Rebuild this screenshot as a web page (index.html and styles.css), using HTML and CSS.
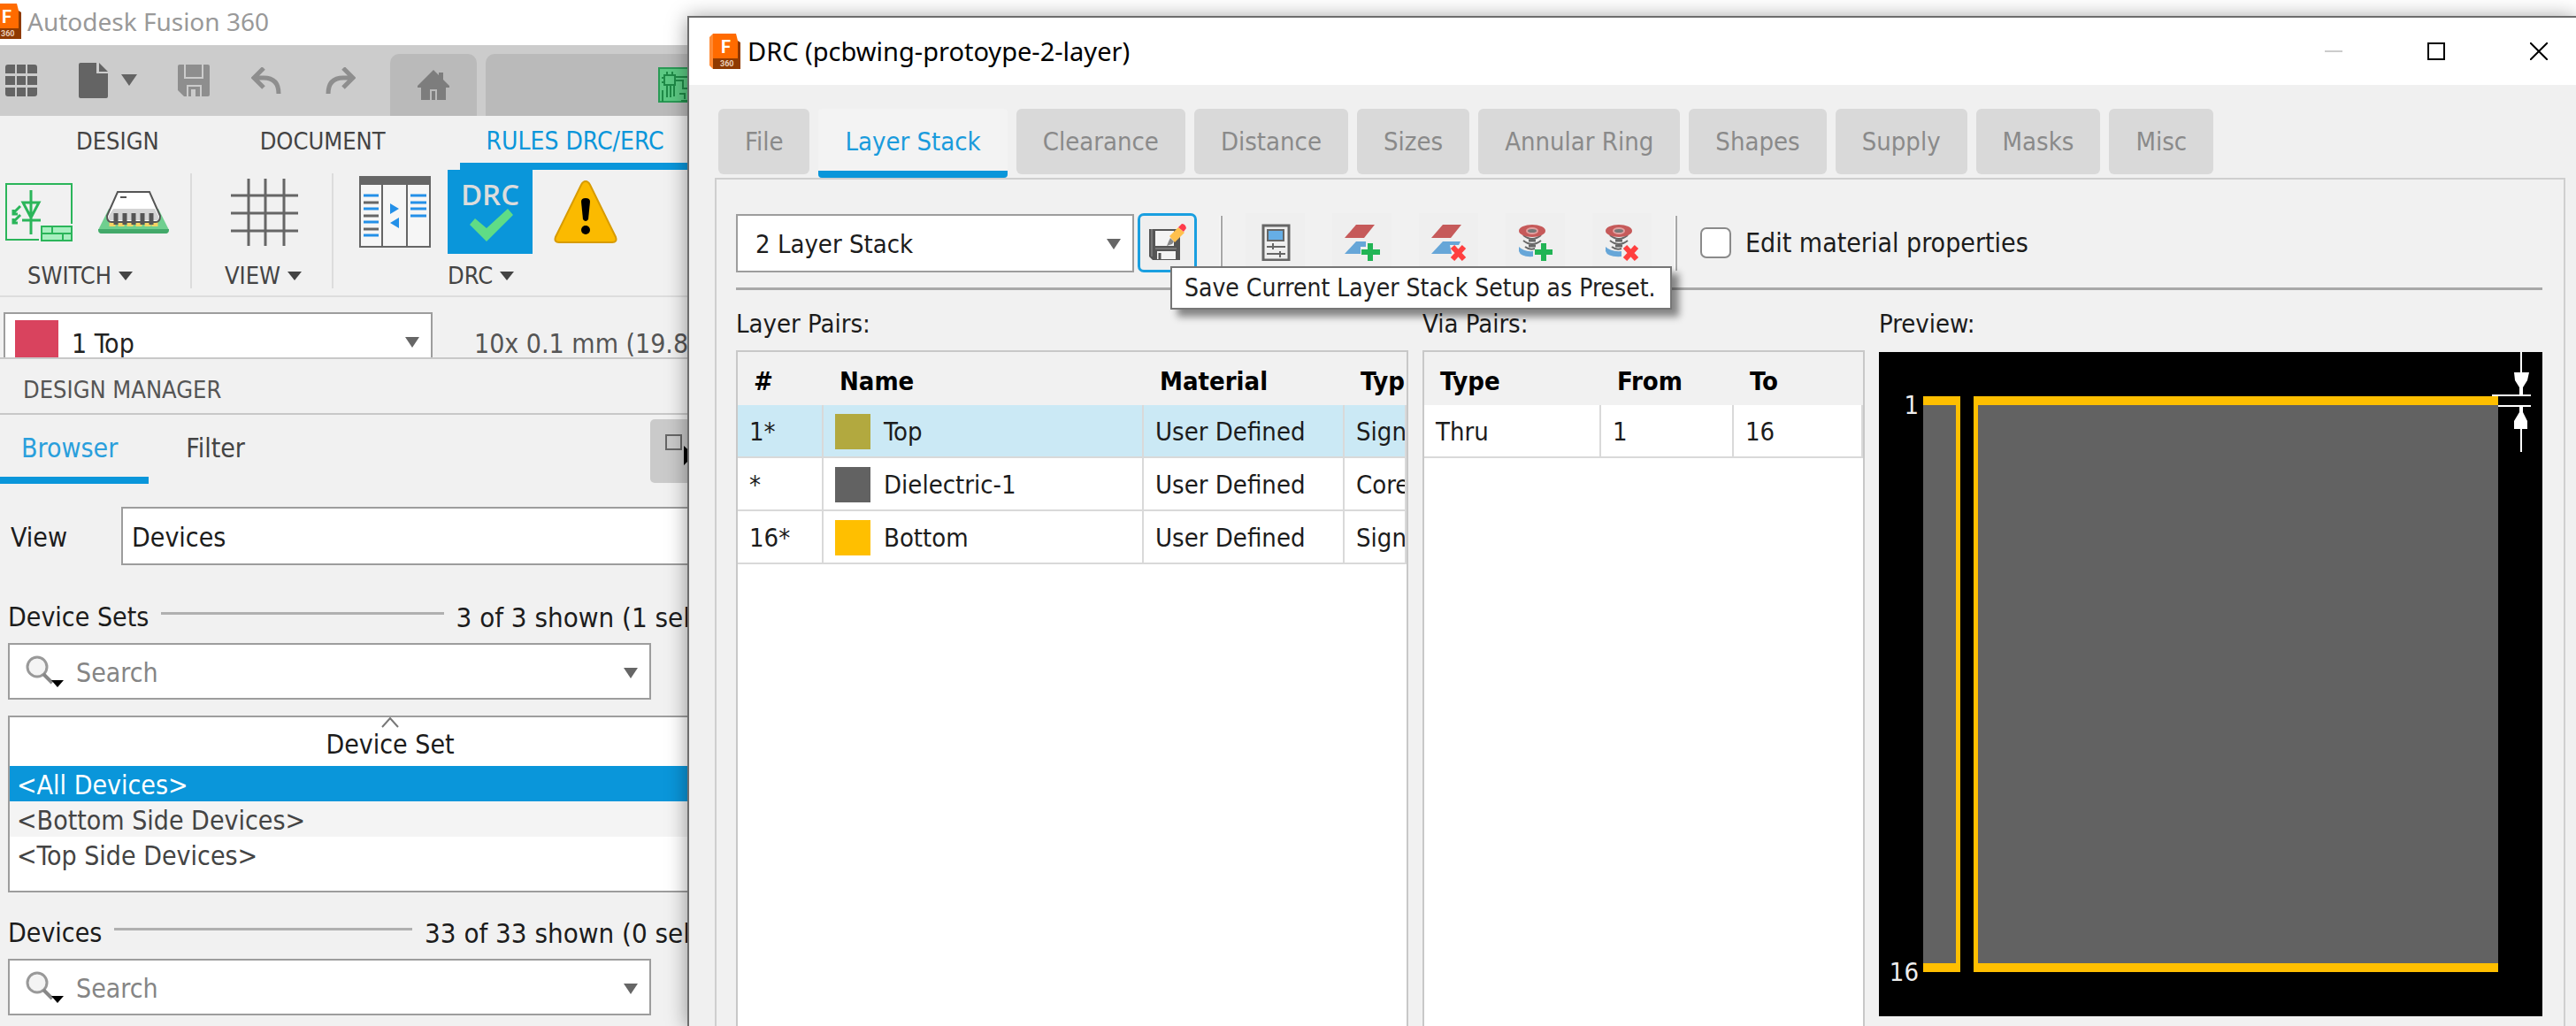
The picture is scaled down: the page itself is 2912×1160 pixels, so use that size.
FILE: index.html
```
<!DOCTYPE html>
<html lang="en">
<head>
  <meta charset="UTF-8">
  <meta name="viewport" content="width=device-width, initial-scale=1">
  <title>Autodesk Fusion 360</title>
  <link rel="stylesheet" href="styles.css">
</head>
<body>

<!-- Main window -->
<div class="app">
  <header class="app-title">
    <svg class="logo" width="35" height="40" viewBox="0 0 35 40">
      <path d="M0 4L4 0V40H4L0 36Z" fill="#ff8a33"/>
      <path d="M4 0H30L32 8V28H4Z" fill="#ff6b00"/>
      <path d="M4 28H32V8L35 10V40H4Z" fill="#8f3a00"/>
      <text x="13" y="22" class="logo-f">F</text>
      <text x="12" y="37" class="logo-n">360</text>
    </svg>
    <span>Autodesk Fusion 360</span>
  </header>

  <div class="quickbar">
    <button class="qa qa-grid" aria-label="Data panel">
      <svg width="36" height="36" viewBox="0 0 36 36" fill="#646464">
        <path d="M3 0H11V10H0V3Q0 0 3 0ZM13 0H23V10H13ZM25 0H33Q36 0 36 3V10H25ZM0 13H11V23H0ZM13 13H23V23H13ZM25 13H36V23H25ZM0 26H11V36H3Q0 36 0 33ZM13 26H23V36H13ZM25 26H36V33Q36 36 33 36H25Z"/>
      </svg>
    </button>
    <button class="qa qa-file" aria-label="File">
      <svg width="66" height="40" viewBox="0 0 66 40" fill="#646464">
        <path d="M2 0H20V12H33V38Q33 40 31 40H2Q0 40 0 38V2Q0 0 2 0ZM23 0L33 10H23ZM48 13H66L57 26Z"/>
      </svg>
    </button>
    <button class="qa qa-save" aria-label="Save">
      <svg width="36" height="36" viewBox="0 0 36 36">
        <path d="M2 0H34Q36 0 36 2V34Q36 36 34 36H7L0 29V2Q0 0 2 0Z" fill="#8e8e8e"/>
        <path d="M8 0V15H28V0M11 36V24H26V36" fill="none" stroke="#ccc" stroke-width="2"/>
        <path d="M15 28H20V36H15Z" fill="#ccc"/>
      </svg>
    </button>
    <button class="qa qa-undo" aria-label="Undo">
      <svg width="34" height="30" viewBox="0 0 34 30" fill="none" stroke="#8e8e8e" stroke-width="5">
        <path d="M14 1L3 12L14 23M4 12H14Q31 12 31 30"/>
      </svg>
    </button>
    <button class="qa qa-redo" aria-label="Redo">
      <svg width="34" height="30" viewBox="0 0 34 30" fill="none" stroke="#8e8e8e" stroke-width="5">
        <path d="M20 1L31 12L20 23M30 12H20Q3 12 3 30"/>
      </svg>
    </button>
    <div class="doc-tab doc-home">
      <svg width="36" height="34" viewBox="0 0 36 34" fill="#7d7d7d">
        <path d="M18 0L24 6V3H29V11L36 18V20H32V34H22V22H14V34H4V20H0V18Z"/>
        <path d="M16 24H20V34H16Z"/>
      </svg>
    </div>
    <div class="doc-tab doc-board">
      <svg width="40" height="40" viewBox="0 0 40 40">
        <path d="M1 1H39V39H1Z" fill="#5cc983" stroke="#2a9a55" stroke-width="2"/>
        <path d="M7 9H19V20H7ZM10 5V9M16 5V9M4 12H7M4 17H7M10 20V34M14 20V34M18 20V33M19 11H40M19 15H28V24H34M5 26V39M24 30H30V36M26 38H34" fill="none" stroke="#1f8a47" stroke-width="2"/>
      </svg>
    </div>
  </div>

  <nav class="ribbon-tabs">
    <a href="#">DESIGN</a>
    <a href="#">DOCUMENT</a>
    <a href="#" class="active">RULES DRC/ERC</a>
  </nav>

  <div class="ribbon">
    <div class="group group-switch">
      <div class="group-icons">
        <svg width="76" height="66" viewBox="0 0 76 66" fill="none" stroke="#2bb55a" stroke-width="3">
          <path d="M38 64H1V1H75V46" stroke-width="2"/>
          <path d="M29 8V58M19 42H40M20 22H38L29 39ZM17 26L9 34M17 36L9 44M9 30V35H14M9 40V45H14"/>
          <path d="M41 49H75V65H41ZM41 57H75M53 49V57M65 57V65" fill="#a8efc0" stroke-width="2"/>
        </svg>
        <svg width="80" height="48" viewBox="0 0 80 48">
          <path d="M12 20L68 20L80 44Q80 48 76 48H4Q0 48 0 44Z" fill="#6fcf8f"/>
          <path d="M0 43H80Q80 48 76 48H4Q0 48 0 43Z" fill="#43a96a"/>
          <path d="M16 34V40M26 34V40M36 34V40M46 34V40M56 34V40M64 34V40" stroke="#f6d464" stroke-width="7"/>
          <path d="M22 1H58L70 28Q70 35 65 35H15Q10 35 10 28Z" fill="#fff" stroke="#555" stroke-width="2"/>
          <path d="M17 20H64L68 28V33H12V28Z" fill="#d4d4d4"/>
          <path d="M20 25V38M30 25V38M40 25V38M50 25V38M60 25V38" stroke="#555" stroke-width="5"/>
          <path d="M25 7H32" stroke="#555" stroke-width="2"/>
        </svg>
      </div>
      <button class="group-label">SWITCH <i class="tri"></i></button>
    </div>
    <div class="group group-view">
      <div class="group-icons">
        <svg width="76" height="76" viewBox="0 0 76 76" fill="none" stroke="#666" stroke-width="3">
          <path d="M0 19H76M0 39H76M0 59H76M20 0V76M39 0V76M60 0V76"/>
        </svg>
      </div>
      <button class="group-label">VIEW <i class="tri"></i></button>
    </div>
    <div class="group group-drc">
      <div class="group-icons">
        <svg width="81" height="81" viewBox="0 0 81 81" fill="none">
          <path d="M1 1H80V80H1Z" fill="#f6f6f6" stroke="#666" stroke-width="2"/>
          <path d="M0 0H81V10H0Z" fill="#666"/>
          <path d="M26 10V80M54 10V80" stroke="#666" stroke-width="2"/>
          <path d="M5 22H22M5 37H22M5 52H22M5 67H22M58 22H76M58 30H76M58 37H76M58 45H76" stroke="#2490e8" stroke-width="3"/>
          <path d="M5 30H22M5 45H22M5 60H22" stroke="#666" stroke-width="3"/>
          <path d="M35 31L45 37L35 43ZM45 47L35 53L45 59Z" fill="#2490e8"/>
        </svg>
        <button class="drc-button" aria-label="DRC">
          <svg width="96" height="95" viewBox="0 0 96 95">
            <text x="48" y="40" class="drc-text">DRC</text>
            <path d="M25 62L31 55L44 66L68 44L74 51L44 81Z" fill="#5fdc86"/>
          </svg>
        </button>
        <svg class="warning" width="72" height="71" viewBox="0 0 72 71">
          <path d="M36 1Q39 1 41 5L70 64Q72 70 66 70H6Q0 70 2 64L31 5Q33 1 36 1Z" fill="#fbba00" stroke="#d79b00" stroke-width="2"/>
          <path d="M31 24Q31 20 36 20T41 24L39 44Q36 48 33 44Z"/>
          <circle cx="36" cy="56" r="5"/>
        </svg>
      </div>
      <button class="group-label">DRC <i class="tri"></i></button>
    </div>
  </div>

  <div class="layer-row">
    <div class="combo layer-combo">
      <span class="layer-swatch"></span>
      <select aria-label="Layer"><option>1 Top</option></select>
    </div>
    <span class="grid-info">10x 0.1 mm (19.8</span>
  </div>

  <h2 class="manager-title">DESIGN MANAGER</h2>

  <div class="manager-tabs">
    <a href="#" class="active">Browser</a>
    <a href="#">Filter</a>
    <button class="pick" aria-label="Select">
      <svg width="40" height="40" viewBox="0 0 40 40">
        <path d="M2 2H19V18H2Z" fill="none" stroke="#666" stroke-width="2"/>
        <path d="M22 14L38 29H29L22 36Z"/>
      </svg>
    </button>
  </div>

  <div class="view-row">
    <label for="view">View</label>
    <select id="view"><option>Devices</option></select>
  </div>

  <div class="section-head">
    <span>Device Sets</span><i class="rule"></i><span class="count">3 of 3 shown (1 sel</span>
  </div>
  <div class="combo search">
    <svg width="44" height="36" viewBox="0 0 44 36">
      <ellipse cx="13" cy="13" rx="11" ry="11" fill="#f4f4f4" stroke="#999" stroke-width="3"/>
      <path d="M20 21L30 31" stroke="#888" stroke-width="4"/>
      <path d="M29 28H43L36 36Z"/>
    </svg>
    <input type="text" placeholder="Search" aria-label="Search device sets">
  </div>

  <table class="device-sets">
    <thead>
      <tr><th><svg class="sort" width="20" height="12" viewBox="0 0 20 12" fill="none" stroke="#777" stroke-width="2"><path d="M1 11L10 1L19 11"/></svg>Device Set</th></tr>
    </thead>
    <tbody>
      <tr class="selected"><td>&lt;All Devices&gt;</td></tr>
      <tr class="alt"><td>&lt;Bottom Side Devices&gt;</td></tr>
      <tr><td>&lt;Top Side Devices&gt;</td></tr>
    </tbody>
  </table>

  <div class="section-head section-devices">
    <span>Devices</span><i class="rule"></i><span class="count">33 of 33 shown (0 sel</span>
  </div>
  <div class="combo search">
    <svg width="44" height="36" viewBox="0 0 44 36">
      <ellipse cx="13" cy="13" rx="11" ry="11" fill="#f4f4f4" stroke="#999" stroke-width="3"/>
      <path d="M20 21L30 31" stroke="#888" stroke-width="4"/>
      <path d="M29 28H43L36 36Z"/>
    </svg>
    <input type="text" placeholder="Search" aria-label="Search devices">
  </div>
</div>

<!-- DRC dialog -->
<div class="dialog">
  <div class="dialog-title">
    <svg class="logo" width="35" height="40" viewBox="0 0 35 40">
      <path d="M0 4L4 0V40H4L0 36Z" fill="#ff8a33"/>
      <path d="M4 0H30L32 8V28H4Z" fill="#ff6b00"/>
      <path d="M4 28H32V8L35 10V40H4Z" fill="#8f3a00"/>
      <text x="13" y="22" class="logo-f">F</text>
      <text x="12" y="37" class="logo-n">360</text>
    </svg>
    <span>DRC (pcbwing-protoype-2-layer)</span>
    <div class="win-buttons">
      <button aria-label="Minimize"><svg width="20" height="20" viewBox="0 0 20 20"><path d="M0 10H20" stroke="#ccc" stroke-width="2"/></svg></button>
      <button aria-label="Maximize"><svg width="20" height="20" viewBox="0 0 20 20"><path d="M1 1H19V19H1Z" fill="none" stroke="#000" stroke-width="2"/></svg></button>
      <button aria-label="Close"><svg width="20" height="20" viewBox="0 0 20 20"><path d="M0 0L20 20M20 0L0 20" stroke="#000" stroke-width="2"/></svg></button>
    </div>
  </div>

  <div class="dialog-body">
    <div class="tabs">
      <button>File</button>
      <button class="active">Layer Stack</button>
      <button>Clearance</button>
      <button>Distance</button>
      <button>Sizes</button>
      <button>Annular Ring</button>
      <button>Shapes</button>
      <button>Supply</button>
      <button>Masks</button>
      <button>Misc</button>
    </div>

    <div class="panel">
      <div class="toolbar">
        <div class="combo stack-combo">
          <select aria-label="Preset"><option>2 Layer Stack</option></select>
        </div>
        <div class="save-wrap">
          <button class="tool tool-save" aria-label="Save preset">
            <svg width="42" height="42" viewBox="0 0 42 42">
              <path d="M0 6H35V41H4L0 37Z" fill="#555"/>
              <path d="M7 8H28V25H7Z" fill="#f4f4f4"/>
              <path d="M3 6V37M7 28H31" stroke="#777" stroke-width="2"/>
              <path d="M9 31H30V40H9Z" fill="#f4f4f4"/>
              <path d="M12 33V40" stroke="#555" stroke-width="3"/>
              <path d="M22 20L20 25L26 23L28 20L24 16Z" fill="#888"/>
              <path d="M23 14L33 4L40 10L29 21Z" fill="#ffc04d"/>
              <path d="M33 4L37 0Q41 0 42 5L39 9Z" fill="#ff3b4b"/>
            </svg>
          </button>
          <div class="tooltip" role="tooltip">Save Current Layer Stack Setup as Preset.</div>
        </div>
        <i class="sep"></i>
        <button class="tool" aria-label="Layer properties">
          <svg width="42" height="42" viewBox="0 0 42 42" fill="none" stroke="#666" stroke-width="2">
            <path d="M7 2H36V41H7Z" stroke-width="3"/>
            <path d="M12 7H30V19H12Z" fill="#66aee6"/>
            <path d="M11 26H32M11 34H32M18 22V29M26 31V38"/>
          </svg>
        </button>
        <button class="tool" aria-label="Add layer pair">
          <svg width="42" height="42" viewBox="0 0 42 42">
            <path d="M14 1H35L23 16H1Z" fill="#c65a5a"/>
            <path d="M14 20H25V26H19V34H1Z" fill="#66a6d8"/>
            <path d="M27 22H33V29H41V35H33V42H27V35H20V29H27Z" fill="#22b455"/>
          </svg>
        </button>
        <button class="tool" aria-label="Remove layer pair">
          <svg width="42" height="42" viewBox="0 0 42 42">
            <path d="M14 1H35L23 16H1Z" fill="#c65a5a"/>
            <path d="M14 20H34L32 24H22L24 34H1Z" fill="#66a6d8"/>
            <path d="M25 26L38 40M38 26L25 40" stroke="#ff3f3f" stroke-width="6"/>
          </svg>
        </button>
        <button class="tool" aria-label="Add via pair">
          <svg width="42" height="42" viewBox="0 0 42 42">
            <path d="M7 13Q17 21 27 13M7 19Q17 27 27 19M9 26Q14 30 20 28" fill="none" stroke="#666" stroke-width="2"/>
            <path d="M13 19H21M13 25H21" stroke="#666" stroke-width="3"/>
            <ellipse cx="17" cy="8" rx="15" ry="7" fill="#c65a5a"/>
            <ellipse cx="17" cy="8" rx="6" ry="3" fill="#777" stroke="#e0a0a0" stroke-width="2"/>
            <path d="M2 26Q8 32 18 31V37Q4 38 2 31Z" fill="#66a6d8"/>
            <path d="M27 22H33V29H40V35H33V42H27V35H20V29H27Z" fill="#22b455"/>
          </svg>
        </button>
        <button class="tool" aria-label="Remove via pair">
          <svg width="42" height="42" viewBox="0 0 42 42">
            <path d="M7 13Q17 21 27 13M7 19Q17 27 27 19M9 26Q14 30 20 28" fill="none" stroke="#666" stroke-width="2"/>
            <path d="M13 19H21M13 25H21" stroke="#666" stroke-width="3"/>
            <ellipse cx="17" cy="8" rx="15" ry="7" fill="#c65a5a"/>
            <ellipse cx="17" cy="8" rx="6" ry="3" fill="#777" stroke="#e0a0a0" stroke-width="2"/>
            <path d="M2 26Q8 32 20 31V37Q4 38 2 31Z" fill="#66a6d8"/>
            <path d="M24 26L37 40M37 26L24 40" stroke="#ff3f3f" stroke-width="6"/>
          </svg>
        </button>
        <i class="sep"></i>
        <label class="edit-props"><input type="checkbox"> Edit material properties</label>
      </div>

      <div class="columns">
        <div class="column">
          <h3>Layer Pairs:</h3>
          <div class="frame">
            <table class="pairs">
              <colgroup><col class="c-num"><col class="c-name"><col class="c-mat"><col></colgroup>
              <thead><tr><th>#</th><th>Name</th><th>Material</th><th>Typ</th></tr></thead>
              <tbody>
                <tr class="selected"><td>1*</td><td><div class="name"><i class="swatch top"></i>Top</div></td><td>User Defined</td><td>Sign</td></tr>
                <tr><td>*</td><td><div class="name"><i class="swatch core"></i>Dielectric-1</div></td><td>User Defined</td><td>Core</td></tr>
                <tr><td>16*</td><td><div class="name"><i class="swatch bottom"></i>Bottom</div></td><td>User Defined</td><td>Sign</td></tr>
              </tbody>
            </table>
          </div>
        </div>

        <div class="column">
          <h3>Via Pairs:</h3>
          <div class="frame">
            <table class="pairs">
              <colgroup><col class="c-type"><col class="c-from"><col></colgroup>
              <thead><tr><th>Type</th><th>From</th><th>To</th></tr></thead>
              <tbody><tr><td>Thru</td><td>1</td><td>16</td></tr></tbody>
            </table>
          </div>
        </div>

        <div class="column">
          <h3>Preview:</h3>
          <svg class="preview" viewBox="0 0 750 751">
            <path d="M0 0H750V751H0Z"/>
            <path d="M50 60H87V691H50ZM112 60H700V691H112Z" fill="#626262"/>
            <path d="M50 50H92V701H50V691H87V60H50ZM107 50H700V60H112V691H700V701H107Z" fill="#ffbf00"/>
            <text x="45" y="70">1</text>
            <text x="45" y="711">16</text>
            <path d="M693 49H737M700 61H737M726 0V24M726 86V113" stroke="#fff" stroke-width="2"/>
            <path d="M718 23H735L733 32L728 40V48H724V40L719 32ZM724 62H728V68L733 78V87H718V78L724 68Z" fill="#fff"/>
          </svg>
        </div>
      </div>
    </div>
  </div>
</div>

</body>
</html>
```
FILE: styles.css
```
* {
  box-sizing: border-box;
}
body {
  margin: 0;
  height: 100vh;
  overflow: hidden;
  background: #fff;
  color: #1c1c1c;
  font: 30px/36px "DejaVu Sans Condensed", "DejaVu Sans", sans-serif;
}
button, input, select {
  font: inherit;
  color: inherit;
  border: none;
  background: none;
  padding: 0;
  margin: 0;
}
a {
  color: inherit;
  text-decoration: none;
}
svg {
  display: block;
  flex: none;
}

/* main window */
.app {
  width: 780px;
  height: 100vh;
  overflow: hidden;
  background: #f1f1f1;
}
.logo-f {
  font: bold 20px Roboto, sans-serif;
  fill: #fff;
}
.logo-n {
  font: bold 9px Roboto, sans-serif;
  fill: #e8cdb8;
}
.app-title {
  display: flex;
  align-items: center;
  gap: 7px;
  height: 51px;
  padding-bottom: 4px;
  background: #fff;
  color: #999;
  font: 28px/40px "Noto Sans", sans-serif;
}
.app-title .logo {
  margin-left: -11px;
}
.quickbar {
  display: flex;
  align-items: center;
  height: 80px;
  background: #ccc;
  white-space: nowrap;
}
.qa {
  flex: none;
}
.qa-grid { margin-left: 6px; }
.qa-file { margin-left: 47px; }
.qa-save { margin-left: 46px; }
.qa-undo { margin-left: 47px; }
.qa-redo { margin-left: 50px; }
.doc-tab {
  display: flex;
  align-items: center;
  flex: none;
  align-self: flex-end;
  height: 70px;
  border-radius: 10px 10px 0 0;
  background: #bababa;
}
.doc-home {
  width: 98px;
  margin-left: 39px;
  justify-content: center;
}
.doc-board {
  width: 400px;
  margin-left: 10px;
  padding-left: 195px;
}
.ribbon-tabs {
  display: flex;
  gap: 54px;
  height: 61px;
  padding-left: 56px;
  font-size: 27px;
  line-height: 57px;
  color: #444;
  white-space: nowrap;
}
.ribbon-tabs a {
  padding: 0 30px;
}
.ribbon-tabs .active {
  border-bottom: 8px solid #0a96da;
  color: #0a96da;
  font-size: 28px;
}
.ribbon {
  display: flex;
  height: 144px;
  border-bottom: 2px solid #ddd;
}
.group {
  flex: none;
  margin: 4px 0 8px;
  border-right: 2px solid #dcdcdc;
}
.group-icons {
  display: flex;
  align-items: center;
  height: 95px;
  margin-top: -4px;
}
.group-switch {
  width: 217px;
  padding-left: 6px;
}
.group-switch .group-icons { gap: 29px; }
.group-switch .group-label { margin-left: 25px; }
.group-view {
  width: 160px;
  padding-left: 44px;
}
.group-view .group-label { margin-left: -7px; }
.group-drc {
  padding-left: 29px;
  border: none;
}
.group-drc .group-icons { gap: 19px; }
.group-drc .group-label { margin-left: 100px; }
.warning { margin-left: 5px; }
.group-label {
  display: flex;
  align-items: center;
  gap: 8px;
  margin-top: 7px;
  font-size: 27px;
  line-height: 36px;
  color: #444;
}
.tri {
  border: 8px solid transparent;
  border-top: 10px solid #444;
  border-bottom: none;
}
.drc-button {
  background: #0a96da;
}
.drc-text {
  font: 600 33px "Open Sans", sans-serif;
  fill: #dcdcdc;
  text-anchor: middle;
}

.combo {
  position: relative;
  display: flex;
  align-items: center;
  border: 2px solid #9d9d9d;
  background: #fff;
}
.combo::after {
  content: "";
  position: absolute;
  right: 13px;
  top: 26px;
  border: 8px solid transparent;
  border-top: 12px solid #666;
  border-bottom: none;
  pointer-events: none;
}
.combo select,
.combo input {
  appearance: none;
  flex: 1;
  min-width: 0;
  height: 100%;
  padding-top: 2px;
  outline: none;
}
.layer-row {
  display: flex;
  height: 70px;
  padding: 17px 0 0 4px;
  overflow: hidden;
  border-bottom: 2px solid #c8c8c8;
  white-space: nowrap;
}
.layer-combo {
  flex: none;
  width: 485px;
  height: 69px;
  gap: 15px;
  padding-left: 11px;
  color: #222;
}
.layer-swatch {
  width: 49px;
  height: 52px;
  background: #d9435e;
}
.grid-info {
  margin-left: 47px;
  line-height: 72px;
  color: #555;
}
.manager-title {
  margin: 0;
  padding: 8px 0 0 26px;
  border-bottom: 2px solid #c8c8c8;
  font-size: 27px;
  font-weight: normal;
  line-height: 53px;
  color: #555;
}
.manager-tabs {
  display: flex;
  height: 78px;
  line-height: 76px;
  color: #444;
}
.manager-tabs a {
  padding: 0 35px 0 24px;
}
.manager-tabs .active {
  margin-right: 18px;
  border-bottom: 8px solid #0a96da;
  color: #2a9fdc;
}
.pick {
  width: 60px;
  flex: none;
  margin: 5px -15px 1px auto;
  padding-left: 16px;
  border-radius: 5px;
  background: #cacaca;
}
.view-row {
  display: flex;
  align-items: center;
  height: 66px;
  margin-top: 26px;
  padding-left: 12px;
  white-space: nowrap;
}
.view-row label {
  flex: none;
  width: 125px;
  padding-top: 4px;
}
.view-row select {
  appearance: none;
  flex: none;
  width: 700px;
  height: 66px;
  padding: 4px 0 0 10px;
  border: 2px solid #9d9d9d;
  background: #fff;
}
.section-head {
  display: flex;
  align-items: center;
  margin: 40px 0 10px 9px;
  line-height: 38px;
  white-space: nowrap;
}
.section-devices {
  margin-top: 27px;
}
.rule {
  flex: 1;
  height: 3px;
  margin: 0 14px 10px;
  background: #b0b0b0;
}
.count {
  font-size: 31px;
}
.search {
  width: 727px;
  height: 64px;
  margin-left: 9px;
  padding-left: 18px;
  gap: 13px;
}
.search input::placeholder {
  color: #858585;
  opacity: 1;
}
.device-sets {
  display: block;
  width: 900px;
  height: 200px;
  margin: 18px 0 0 9px;
  border: 2px solid #9d9d9d;
  border-spacing: 0;
  background: #fff;
  color: #444;
}
.device-sets thead,
.device-sets tbody,
.device-sets tr {
  display: block;
}
.device-sets th {
  display: block;
  width: 860px;
  height: 55px;
  padding: 0;
  font-weight: normal;
  line-height: 38px;
  color: #1c1c1c;
}
.sort {
  margin: 0 auto;
}
.device-sets td {
  display: block;
  height: 40px;
  padding: 0 8px;
  line-height: 44px;
}
.device-sets .selected {
  background: #0a96da;
  color: #fff;
}
.device-sets .alt {
  background: #f4f4f4;
}

/* DRC dialog floats over the main window */
.dialog {
  position: absolute;
  top: 18px;
  left: 777px;
  right: 0;
  bottom: 0;
  display: flex;
  flex-direction: column;
  border: solid #6d6d6d;
  border-width: 2px 0 0 2px;
  background: #f0f0f0;
  box-shadow: 0 2px 22px rgba(0, 0, 0, 0.4);
  font-size: 29px;
}
.dialog-title {
  display: flex;
  align-items: center;
  flex: none;
  gap: 8px;
  height: 76px;
  padding-left: 23px;
  background: #fff;
  color: #000;
  font: 29px/40px "Noto Sans", sans-serif;
}
.win-buttons {
  display: flex;
  gap: 32px;
  margin-left: auto;
}
.win-buttons button {
  display: flex;
  align-items: center;
  justify-content: center;
  width: 84px;
  height: 76px;
}
.dialog-body {
  display: flex;
  flex-direction: column;
  flex: 1;
  min-height: 0;
  padding: 27px 12px 0 29px;
}
.tabs {
  display: flex;
  gap: 10px;
  height: 78px;
  padding-left: 4px;
}
.tabs button {
  height: 74px;
  padding: 0 30px;
  border-radius: 6px;
  background: #d9d9d9;
  color: #8a8a8a;
}
.tabs .active {
  height: 78px;
  padding-top: 4px;
  border-bottom: 8px solid #0a96da;
  border-radius: 4px;
  background: #f3f3f3;
  color: #1a9bdc;
}
.panel {
  flex: 1;
  display: flex;
  flex-direction: column;
  min-height: 0;
  overflow: hidden;
  padding: 38px 24px 0 22px;
  border: 2px solid #cfcfcf;
  border-bottom: none;
  background: #f1f1f1;
}
.toolbar {
  display: flex;
  align-items: center;
  flex: none;
  height: 87px;
  padding-bottom: 17px;
  border-bottom: 3px solid #a8a8a8;
}
.stack-combo {
  width: 450px;
  height: 66px;
}
.stack-combo select {
  padding-left: 20px;
}
.save-wrap {
  position: relative;
  margin-left: 4px;
}
.tool {
  display: flex;
  align-items: center;
  justify-content: center;
  width: 67px;
  height: 67px;
  padding-bottom: 2px;
  background: #efefef;
}
.tool + .tool {
  margin-left: 31px;
}
.tool-save {
  border: 3px solid #1a9fe0;
  border-radius: 7px;
}
.tooltip {
  position: absolute;
  z-index: 10;
  top: 60px;
  left: 37px;
  padding: 5px 16px 4px 14px;
  border: 2px solid #767676;
  background: #fff;
  box-shadow: 8px 8px 8px rgba(0, 0, 0, 0.45);
  color: #222;
  font-size: 28px;
  white-space: nowrap;
}
.sep {
  width: 3px;
  height: 62px;
  margin: 0 26px;
  border-left: 1px solid #fff;
  background: #a8a8a8;
}
.edit-props {
  display: flex;
  align-items: center;
  gap: 16px;
  font-size: 30px;
}
.edit-props input {
  appearance: none;
  width: 35px;
  height: 35px;
  border: 2px solid #8a8a8a;
  border-radius: 7px;
  background: #fff;
}
.columns {
  display: grid;
  grid-template-columns: 760fr 500fr 750fr;
  gap: 16px;
  flex: 1;
  min-height: 0;
}
.column {
  display: flex;
  flex-direction: column;
  min-width: 0;
  min-height: 0;
}
.column h3 {
  margin: 20px 0 12px;
  font-size: 29px;
  font-weight: normal;
}
.frame {
  flex: 1;
  overflow: hidden;
  border: 2px solid #c8c8c8;
  border-bottom: none;
  background: #fff;
}
.pairs {
  width: 100%;
  table-layout: fixed;
  border-spacing: 0;
}
.pairs th {
  height: 60px;
  padding: 6px 0 0 18px;
  overflow: hidden;
  background: #f1f1f1;
  color: #000;
  text-align: left;
}
.pairs td {
  height: 60px;
  padding: 2px 0 0 13px;
  overflow: hidden;
  border-right: 2px solid #d9d9d9;
  border-bottom: 2px solid #d9d9d9;
  white-space: nowrap;
}
.pairs .selected td {
  background: #cbe9f5;
}
.c-num { width: 97px; }
.c-name { width: 362px; }
.c-mat { width: 227px; }
.c-type { width: 200px; }
.c-from { width: 150px; }
.name {
  display: flex;
  align-items: center;
  gap: 15px;
}
.swatch {
  width: 40px;
  height: 40px;
}
.top { background: #b2a93f; }
.core { background: #626262; }
.bottom { background: #ffbf00; }
.preview {
  width: 100%;
  margin-top: 2px;
}
.preview text {
  fill: #eee;
  font-size: 29px;
  text-anchor: end;
}
```
